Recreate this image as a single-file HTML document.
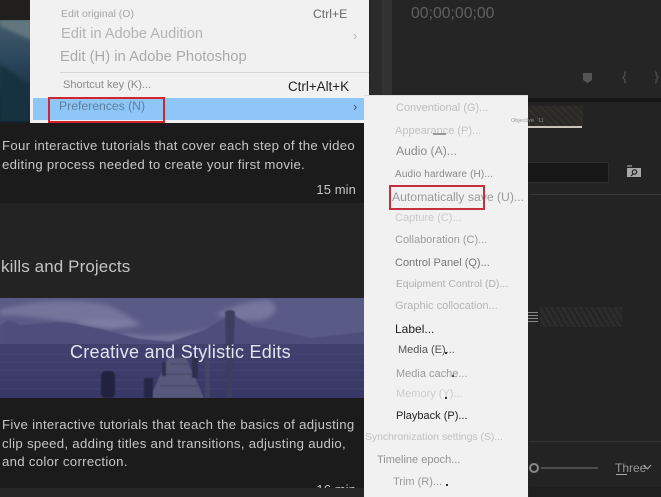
<!DOCTYPE html>
<html><head><meta charset="utf-8">
<style>
html,body{margin:0;padding:0;width:661px;height:497px;overflow:hidden;background:#232323}
body{position:relative;font-family:"Liberation Sans",sans-serif}
div,span,svg{position:absolute}
.t{white-space:nowrap;line-height:1}
.d{color:#c6c6c6;font-size:13.2px;letter-spacing:.3px;left:2px}
</style></head><body>

<!-- left panel -->
<div style="left:0;top:0;width:364px;height:497px;background:#232323"></div>
<div style="left:0;top:0;width:31px;height:20px;background:#211f1d"></div>
<svg style="left:0;top:20px" width="31" height="102" viewBox="0 0 31 102">
<defs><linearGradient id="a" x1="0" y1="0" x2="0" y2="1"><stop offset="0" stop-color="#465d6c"/><stop offset=".4" stop-color="#2a465b"/><stop offset="1" stop-color="#0e2230"/></linearGradient>
<filter id="b1"><feGaussianBlur stdDeviation="1.5"/></filter></defs>
<rect width="31" height="102" fill="url(#a)"/>
<g filter="url(#b1)">
<path d="M0 0H31V20L18 14L0 6Z" fill="#647680"/>
<path d="M0 44L14 54L31 66V102H0Z" fill="#16303f"/>
</g>
</svg>
<div style="left:0;top:122px;width:364px;height:81px;background:#1b1b1b"></div>
<div class="t d" style="top:139px">Four interactive tutorials that cover each step of the video</div>
<div class="t d" style="top:158px">editing process needed to create your first movie.</div>
<div class="t" style="right:305px;top:183px;color:#c6c6c6;font-size:13px;letter-spacing:.1px">15 min</div>

<div class="t" style="left:1px;top:258px;color:#c4c4c4;font-size:17px;letter-spacing:.1px">kills and Projects</div>

<!-- lake image -->
<svg style="left:0;top:298px" width="364" height="100" viewBox="0 0 364 100">
<defs><linearGradient id="w" x1="0" y1="0" x2="0" y2="1"><stop offset="0" stop-color="#42416e"/><stop offset="1" stop-color="#383765"/></linearGradient>
<filter id="b2"><feGaussianBlur stdDeviation="2.5"/></filter>
<filter id="b3"><feGaussianBlur stdDeviation=".6"/></filter></defs>
<rect width="364" height="100" fill="#5a5a86"/>
<g filter="url(#b2)">
<path d="M0 12C30 2 80 0 110 8C122 14 135 22 140 26C110 30 70 24 40 20C20 18 10 16 0 18Z" fill="#74749c"/>
<path d="M215 16C235 8 250 2 268 2C280 8 278 16 262 22C245 24 225 20 215 16Z" fill="#76769e"/>
<path d="M75 26C95 20 125 22 142 27L110 31Z" fill="#8080a6"/>
<path d="M120 35C150 40 190 36 210 30L180 44L130 43Z" fill="#74749c"/>
</g>
<path d="M0 28L8 22L20 27L60 24C85 26 110 34 140 41L170 44L205 32L232 16L252 28L285 34L310 40L364 34V50H0Z" fill="#4f4e7b" filter="url(#b3)"/>
<rect y="46" width="364" height="54" fill="url(#w)"/>
<g stroke="#4e4d7a" stroke-width="1" opacity=".5"><path d="M0 56H364M0 64H364M0 72H364M0 82H364M0 91H364"/></g>
<g filter="url(#b3)">
<path d="M150 100L168 60H186L204 100Z" fill="#59587c"/>
<path d="M170 66H188M165 76H193M160 88H198" stroke="#434264" stroke-width="1"/>
<rect x="101" y="73" width="14" height="27" rx="5" fill="#24233f"/>
<rect x="144" y="80" width="9" height="20" fill="#28274a"/>
<rect x="162" y="64" width="4" height="14" fill="#302f50"/>
<rect x="192" y="56" width="6" height="24" fill="#2f2e4e"/>
<rect x="205" y="50" width="5" height="50" fill="#45446a"/>
<path d="M225 14Q230 10 235 14L232 100H227Z" fill="#3e3d5e"/>
</g>
</svg>
<div class="t" style="left:70px;top:343px;color:#e4e4f0;font-size:18px;letter-spacing:.28px">Creative and Stylistic Edits</div>

<div style="left:0;top:398px;width:364px;height:90px;background:#1b1b1b;overflow:hidden">
<div class="t" style="right:8px;top:85px;color:#c6c6c6;font-size:13px;letter-spacing:.1px">16 min</div>
</div>
<div class="t d" style="top:418px">Five interactive tutorials that teach the basics of adjusting</div>
<div class="t d" style="top:437px">clip speed, adding titles and transitions, adjusting audio,</div>
<div class="t d" style="top:455px">and color correction.</div>
<div style="left:0;top:488px;width:364px;height:9px;background:#262626"></div>

<!-- right area -->
<div style="left:370px;top:0;width:22px;height:96px;background:#2b2b2b"></div>
<div style="left:382px;top:0;width:10px;height:96px;background:#323232"></div>
<div style="left:392px;top:0;width:269px;height:98px;background:#252525"></div>
<div style="left:392px;top:98px;width:269px;height:4px;background:#171717"></div>
<div style="left:370px;top:102px;width:291px;height:395px;background:#232323"></div>
<div class="t" style="left:411px;top:6px;color:#606060;font-size:15.8px">00;00;00;00</div>
<svg style="left:580px;top:68px" width="81" height="20" viewBox="0 0 81 20">
<path d="M3 5H12V12L7.5 15L3 12Z" fill="#555"/>
<path d="M46 4Q44 4 45 7L43 9.5L45 12Q44 15 46 15" fill="none" stroke="#4c4c4c" stroke-width="1.4"/>
<path d="M75 4Q77 4 76 7L78 9.5L76 12Q77 15 75 15" fill="none" stroke="#4c4c4c" stroke-width="1.4"/>
</svg>
<div style="left:528px;top:106px;width:55px;height:20px;background:repeating-linear-gradient(45deg,#2c2a27 0 2px,#353229 2px 3px,#292929 3px 5px)"></div>
<div style="left:528px;top:126px;width:54px;height:2px;background:#c9c5bd"></div>
<div style="left:520px;top:162px;width:87px;height:19px;background:#171717;border:1px solid #2d2d2d"></div>
<svg style="left:626px;top:165px" width="16" height="14" viewBox="0 0 16 14">
<path d="M1 1H6" stroke="#bbb" stroke-width="1"/>
<rect x="1" y="3" width="14" height="9" fill="#a9a9a9"/>
<circle cx="8.5" cy="7" r="2.2" fill="none" stroke="#222" stroke-width="1.2"/>
<path d="M7 9L5 11" stroke="#222" stroke-width="1.2"/>
</svg>
<div style="left:529px;top:194px;width:132px;height:1px;background:#383838"></div>
<div style="left:529px;top:441px;width:132px;height:1px;background:#333"></div>
<div style="left:529px;top:487px;width:132px;height:10px;background:#1f1f1f"></div>
<div style="left:528px;top:312px;width:10px;height:1px;background:#888;box-shadow:0 3px 0 #888,0 6px 0 #888,0 9px 0 #888"></div>
<div style="left:540px;top:307px;width:82px;height:20px;background:repeating-linear-gradient(60deg,#2a2a2a 0 2px,#1e1e1e 2px 3px,#2d2d2d 3px 5px)"></div>
<div style="left:529px;top:463px;width:6px;height:6px;border:2px solid #8a8a8a;border-radius:50%"></div>
<div style="left:541px;top:467px;width:57px;height:2px;background:#4c4c4c"></div>
<div class="t" style="left:615px;top:462px;color:#999;font-size:12px">Three</div>
<div style="left:616px;top:474px;width:11px;height:1px;background:#aaa"></div>
<svg style="left:643px;top:464px" width="9" height="7" viewBox="0 0 9 7"><path d="M1 1L4.5 5L8 1" fill="none" stroke="#aaa"/></svg>

<!-- main menu -->
<div style="left:30px;top:0;width:339px;height:123px;background:#f1f1f1"></div>
<div class="t" style="left:61px;top:9px;color:#a5a5a5;font-size:10.5px">Edit original (O)</div>
<div class="t" style="left:313px;top:8px;color:#666;font-size:12.2px">Ctrl+E</div>
<div class="t" style="left:61px;top:27px;color:#b3b3b3;font-size:14.6px">Edit in Adobe Audition</div>
<div class="t" style="left:353px;top:29px;color:#bbb;font-size:13px">›</div>
<div class="t" style="left:60px;top:50px;color:#aaa;font-size:14.8px">Edit (H) in Adobe Photoshop</div>
<div style="left:60px;top:72px;width:309px;height:1px;background:#d5d5d5"></div>
<div class="t" style="left:63px;top:80px;color:#8a8a8a;font-size:11px">Shortcut key (K)...</div>
<div class="t" style="left:288px;top:80px;color:#222;font-size:13.4px">Ctrl+Alt+K</div>
<div style="left:33px;top:98px;width:332px;height:22px;background:#8dc6f7"></div>
<div class="t" style="left:59px;top:100px;color:#5f7f9e;font-size:12.2px">Preferences (N)</div>
<div class="t" style="left:353px;top:100px;color:#3d566e;font-size:13px">›</div>
<div style="left:48px;top:97px;width:113px;height:22px;border:2px solid #d2232f"></div>

<!-- submenu -->
<div style="left:364px;top:95px;width:164px;height:402px;background:#f1f1f1;border-top:1px solid #ddd"></div>
<div class="t" style="left:396px;top:103px;color:#bdbdbd;font-size:11px">Conventional (G)...</div>
<div class="t" style="left:395px;top:126px;color:#c4c4c4;font-size:11px">Appearance (P)...</div>
<div class="t" style="left:396px;top:145px;color:#8c8c8c;font-size:12.2px">Audio (A)...</div>
<div class="t" style="left:395px;top:170px;color:#8a8a8a;font-size:10px;letter-spacing:.15px">Audio hardware (H)...</div>
<div class="t" style="left:392px;top:191px;color:#9a9a9a;font-size:12.2px">Automatically save (U)...</div>
<div style="left:389px;top:185px;width:92px;height:21px;border:2px solid #c4303c"></div>
<div class="t" style="left:395px;top:213px;color:#cacaca;font-size:11px">Capture (C)...</div>
<div class="t" style="left:395px;top:235px;color:#9c9c9c;font-size:11px">Collaboration (C)...</div>
<div class="t" style="left:395px;top:258px;color:#777;font-size:11px">Control Panel (Q)...</div>
<div class="t" style="left:396px;top:280px;color:#adadad;font-size:10.2px;letter-spacing:.1px">Equipment Control (D)...</div>
<div class="t" style="left:395px;top:301px;color:#b5b5b5;font-size:11px">Graphic collocation...</div>
<div class="t" style="left:395px;top:323px;color:#222;font-size:12px">Label...</div>
<div class="t" style="left:398px;top:345px;color:#555;font-size:11px">Media (E)...</div>
<div class="t" style="left:396px;top:369px;color:#999;font-size:11px">Media cache...</div>
<div class="t" style="left:396px;top:389px;color:#cdcdcd;font-size:11px">Memory (Y)...</div>
<div class="t" style="left:396px;top:411px;color:#222;font-size:11px">Playback (P)...</div>
<div class="t" style="left:365px;top:433px;color:#c0c0c0;font-size:10.4px">Synchronization settings (S)...</div>
<div class="t" style="left:377px;top:455px;color:#929292;font-size:11px">Timeline epoch...</div>
<div class="t" style="left:393px;top:477px;color:#999;font-size:11px">Trim (R)...</div>
<div style="left:433px;top:133px;width:13px;height:2px;background:#999"></div>
<div style="left:445px;top:352px;width:2px;height:2px;background:#333"></div>
<div style="left:452px;top:375px;width:2px;height:2px;background:#555"></div>
<div style="left:445px;top:397px;width:2px;height:2px;background:#333"></div>
<div style="left:446px;top:484px;width:2px;height:2px;background:#333"></div>
<div class="t" style="left:511px;top:119px;color:#9a9a9a;font-size:5.5px">Objective</div>
<div class="t" style="left:538px;top:119px;color:#8a8a8a;font-size:5.5px">11</div>
</body></html>
